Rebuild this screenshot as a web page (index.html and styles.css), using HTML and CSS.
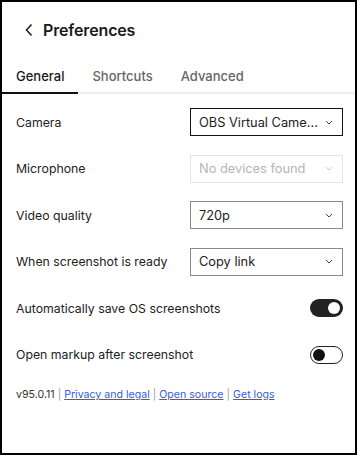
FILE: index.html
```html
<!DOCTYPE html>
<html>
<head>
<meta charset="utf-8">
<link rel="stylesheet" href="styles.css">
</head>
<body>
<div class="window">
  <div class="header">
    <svg class="back" width="10" height="14" viewBox="0 0 10 14"><path d="M7.5 1.5 L2.5 7 L7.5 12.5" fill="none" stroke="#222" stroke-width="1.6"/></svg>
    <span class="title">Preferences</span>
  </div>
  <div class="tabs">
    <div class="tab active">General</div>
    <div class="tab">Shortcuts</div>
    <div class="tab">Advanced</div>
  </div>
  <div class="content">
    <div class="row">
      <span class="label">Camera</span>
      <div class="select focused"><span>OBS Virtual Came...</span><svg class="chev" width="8" height="5" viewBox="0 0 8 5"><path d="M1 1 L4 4 L7 1" fill="none" stroke="#444" stroke-width="1"/></svg></div>
    </div>
    <div class="row">
      <span class="label">Microphone</span>
      <div class="select disabled"><span>No devices found</span><svg class="chev" width="8" height="5" viewBox="0 0 8 5"><path d="M1 1 L4 4 L7 1" fill="none" stroke="#ccc" stroke-width="1"/></svg></div>
    </div>
    <div class="row">
      <span class="label">Video quality</span>
      <div class="select"><span>720p</span><svg class="chev" width="8" height="5" viewBox="0 0 8 5"><path d="M1 1 L4 4 L7 1" fill="none" stroke="#444" stroke-width="1"/></svg></div>
    </div>
    <div class="row">
      <span class="label">When screenshot is ready</span>
      <div class="select"><span>Copy link</span><svg class="chev" width="8" height="5" viewBox="0 0 8 5"><path d="M1 1 L4 4 L7 1" fill="none" stroke="#444" stroke-width="1"/></svg></div>
    </div>
    <div class="row">
      <span class="label">Automatically save OS screenshots</span>
      <div class="toggle on"><div class="knob"></div></div>
    </div>
    <div class="row">
      <span class="label">Open markup after screenshot</span>
      <div class="toggle off"><div class="knob"></div></div>
    </div>
    <div class="footer">
      <span class="ver">v95.0.11</span><span class="sep">|</span><a href="#">Privacy and legal</a><span class="sep">|</span><a href="#">Open source</a><span class="sep">|</span><a href="#">Get logs</a>
    </div>
  </div>
</div>
</body>
</html>
```
FILE: styles.css
```css
* { box-sizing: border-box; }
html, body { margin: 0; padding: 0; background: #fff; }
body { font-family: Inter, "Noto Sans", sans-serif; color: #222; }
.window {
  width: 357px;
  height: 455px;
  border: 2px solid #000;
  background: #fff;
  display: flex;
  flex-direction: column;
}
.header {
  height: 56px;
  display: flex;
  align-items: center;
  padding-left: 22px;
  gap: 9px;
}
.back { display: block; }
.title { font-size: 16px; font-weight: 600; color: #1a1a1a; letter-spacing: -0.15px; }
.tabs {
  display: flex;
  border-bottom: 2px solid #eeeeee;
  height: 36px;
}
.tab {
  padding: 10px 14px 0 14px;
  font-size: 13px;
  color: #666;
  font-weight: 500;
  margin-bottom: -2px;
  border-bottom: 2px solid transparent;
  line-height: 17px;
}
.tab.active { color: #1a1a1a; border-bottom-color: #111; }
.content {
  padding: 14px 12px 0 14px;
  display: flex;
  flex-direction: column;
  gap: 18.5px;
}
.row {
  height: 28px;
  display: flex;
  align-items: center;
  justify-content: space-between;
}
.label { font-size: 12.3px; color: #222; }
.select {
  width: 153px;
  height: 28px;
  border: 1px solid #8a8a8a;
  display: flex;
  align-items: center;
  justify-content: space-between;
  padding: 0 9px 0 8px;
  font-size: 12.8px;
  color: #222;
}
.select.focused { border-color: #111; }
.select.disabled { border-color: #e4e4e4; color: #b5b5b5; }
.chev { display: block; }
.toggle {
  width: 33px;
  height: 18px;
  border-radius: 9px;
  position: relative;
}
.toggle.on { background: #222; }
.toggle.off { background: #fff; border: 1px solid #222; }
.knob {
  position: absolute;
  width: 12px;
  height: 12px;
  border-radius: 50%;
  top: 3px;
}
.toggle.on .knob { background: #fff; right: 3px; }
.toggle.off .knob { background: #111; left: 2px; top: 2px; }
.footer {
  margin-top: 1px;
  font-size: 10.6px;
  line-height: 13px;
  color: #333;
}
.sep { color: #a0a0a0; margin: 0 3px; }
.footer a { color: #3a5ad8; text-decoration: underline; }
```
